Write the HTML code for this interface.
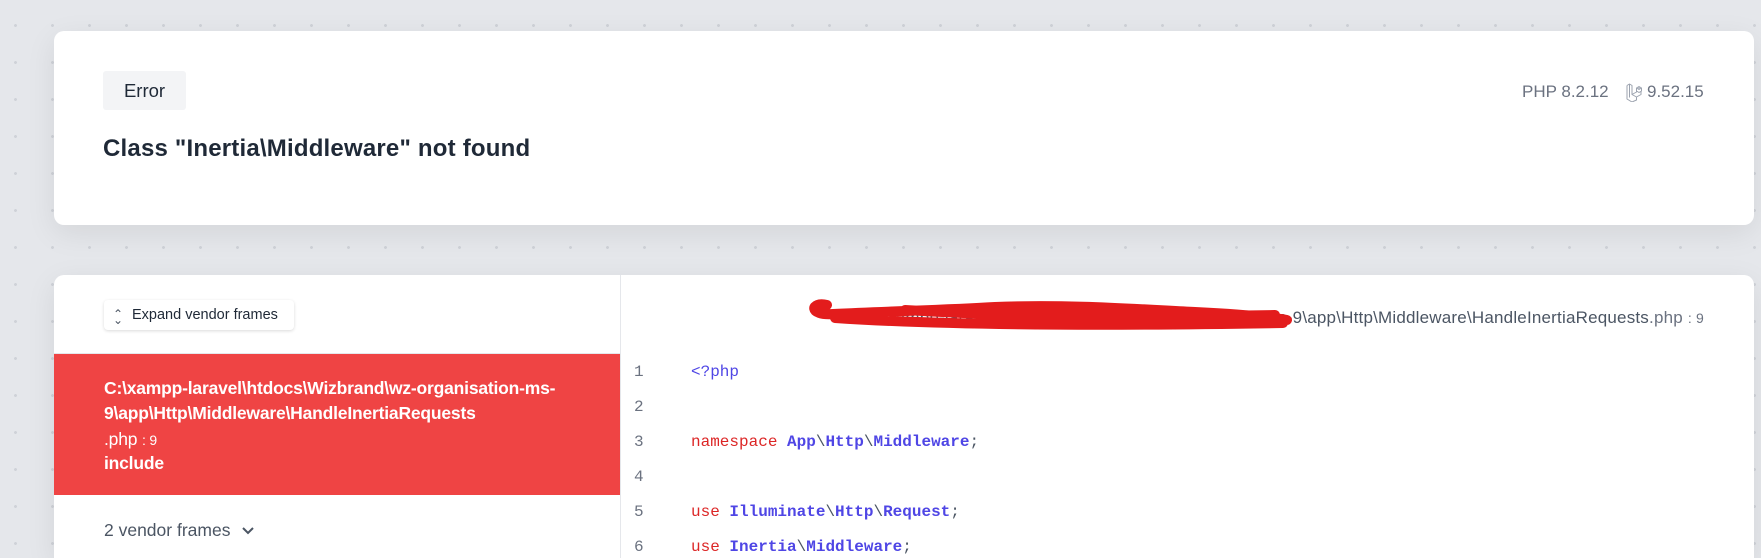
<!DOCTYPE html>
<html><head><meta charset="utf-8"><style>
html,body{margin:0;padding:0;width:1761px;height:558px;overflow:hidden;}
body{position:relative;background-color:#e5e7eb;
background-image:radial-gradient(circle,#cfd2d8 1.3px,transparent 1.6px);background-size:37px 37px;background-position:-3px 7px;
font-family:"Liberation Sans",sans-serif;}
.card{position:absolute;background:#fff;border-radius:10px;box-shadow:0 8px 30px rgba(0,0,0,0.08);}
.badge{position:absolute;left:103px;top:71px;width:83px;height:39px;background:#f3f4f6;border-radius:3px;font-size:18.5px;color:#1f2937;line-height:39px;text-align:center;}
.title{position:absolute;left:103px;top:135px;font-size:24px;font-weight:bold;color:#1f2937;letter-spacing:0.2px;}
.ver{position:absolute;top:82px;font-size:17px;color:#6b7280;}
.btn{position:absolute;left:104px;top:300px;width:190px;height:30px;background:#fff;border-radius:4px;box-shadow:0 1px 3px rgba(0,0,0,0.15);font-size:14.5px;color:#1f2937;line-height:30px;}
.red{position:absolute;left:54px;top:354px;width:566px;height:141px;background:#ef4444;color:#fff;}
.red .t{position:absolute;left:50px;font-size:17.5px;font-weight:bold;white-space:nowrap;letter-spacing:-0.2px;}
.ln{position:absolute;left:634px;width:20px;font-family:"Liberation Mono",monospace;font-size:16px;color:#6b7280;}
.code{position:absolute;left:691px;font-family:"Liberation Mono",monospace;font-size:16px;white-space:pre;color:#4b5563;}
.k{color:#dc2626}.c{color:#4f46e5;font-weight:bold}.p{color:#4f46e5}
</style></head><body>
<div class="card" style="left:54px;top:31px;width:1700px;height:194px;"></div>
<div class="badge">Error</div>
<div class="title">Class "Inertia\Middleware" not found</div>
<div class="ver" style="left:1522px;">PHP 8.2.12</div>
<svg style="position:absolute;left:1626px;top:83px" width="18" height="19" viewBox="0 0 18 19" fill="none" stroke="#9ca3af" stroke-width="1" stroke-linejoin="round"><path d="M1 2.5L3.5 1 6 2.5v9l4.5-2.5V5l2.5-1.5L15.5 5v3l-2.5 1.5L10.5 8M6 11.5l4.5 2.5v3L6 19 1 16V2.5M3.5 1v13.5M10.5 14l4.5-2.5V8.5"/><path d="M13 3.5V6.5M10.5 5L13 6.5 15.5 5"/></svg>
<div class="ver" style="left:1647px;">9.52.15</div>

<div class="card" style="left:54px;top:275px;width:1700px;height:283px;border-radius:10px 10px 0 0;"></div>
<div style="position:absolute;left:620px;top:275px;width:1px;height:283px;background:#e5e7eb"></div>
<div class="btn"><span style="position:absolute;left:9px;top:-1px;font-size:12px;color:#4b5563">&#8963;</span><span style="position:absolute;left:9px;top:5px;font-size:12px;color:#4b5563">&#8964;</span><span style="position:absolute;left:28px;">Expand vendor frames</span></div>
<div style="position:absolute;left:54px;top:353px;width:566px;height:1px;background:#e5e7eb"></div>
<div class="red">
<div class="t" style="top:24px">C:\xampp-laravel\htdocs\Wizbrand\wz-organisation-ms-</div>
<div class="t" style="top:49px">9\app\Http\Middleware\HandleInertiaRequests</div>
<div class="t" style="top:75px;font-weight:normal">.php <span style="font-size:14px">: 9</span></div>
<div class="t" style="top:99px">include</div>
</div>
<div style="position:absolute;left:104px;top:520px;font-size:17.5px;color:#4b5563">2 vendor frames <svg width="14" height="10" viewBox="0 0 14 10" style="margin-left:6px"><path d="M2 2l5 5 5-5" stroke="#4b5563" stroke-width="2" fill="none"/></svg></div>

<div style="position:absolute;right:57px;top:308px;font-size:17px;color:#4b5563;white-space:nowrap;letter-spacing:0.2px">C:\xampp-laravel\htdocs\Wizbrand\wz-organisation-ms-9\app\Http\Middleware\HandleInertiaRequests<span style="color:#6b7280">.php <span style="font-size:14px">: 9</span></span></div>
<svg style="position:absolute;left:805px;top:296px" width="500" height="40" viewBox="0 0 500 40"><path d="M22 9 C5 5,3 20,28 18 C90 15,140 14,190 11 C260 8,330 13,390 16 C430 18,465 21,482 24 M30 22 C120 28,250 31,478 27 M100 14 C200 20,300 22,470 19" stroke="#e31c1c" stroke-width="10" fill="none" stroke-linecap="round"/></svg>

<div class="ln" style="top:363px">1</div><div class="code p" style="top:363px">&lt;?php</div>
<div class="ln" style="top:398px">2</div>
<div class="ln" style="top:433px">3</div><div class="code" style="top:433px"><span class="k">namespace</span> <span class="c">App</span>\<span class="c">Http</span>\<span class="c">Middleware</span>;</div>
<div class="ln" style="top:468px">4</div>
<div class="ln" style="top:503px">5</div><div class="code" style="top:503px"><span class="k">use</span> <span class="c">Illuminate</span>\<span class="c">Http</span>\<span class="c">Request</span>;</div>
<div class="ln" style="top:538px">6</div><div class="code" style="top:538px"><span class="k">use</span> <span class="c">Inertia</span>\<span class="c">Middleware</span>;</div>
</body></html>
